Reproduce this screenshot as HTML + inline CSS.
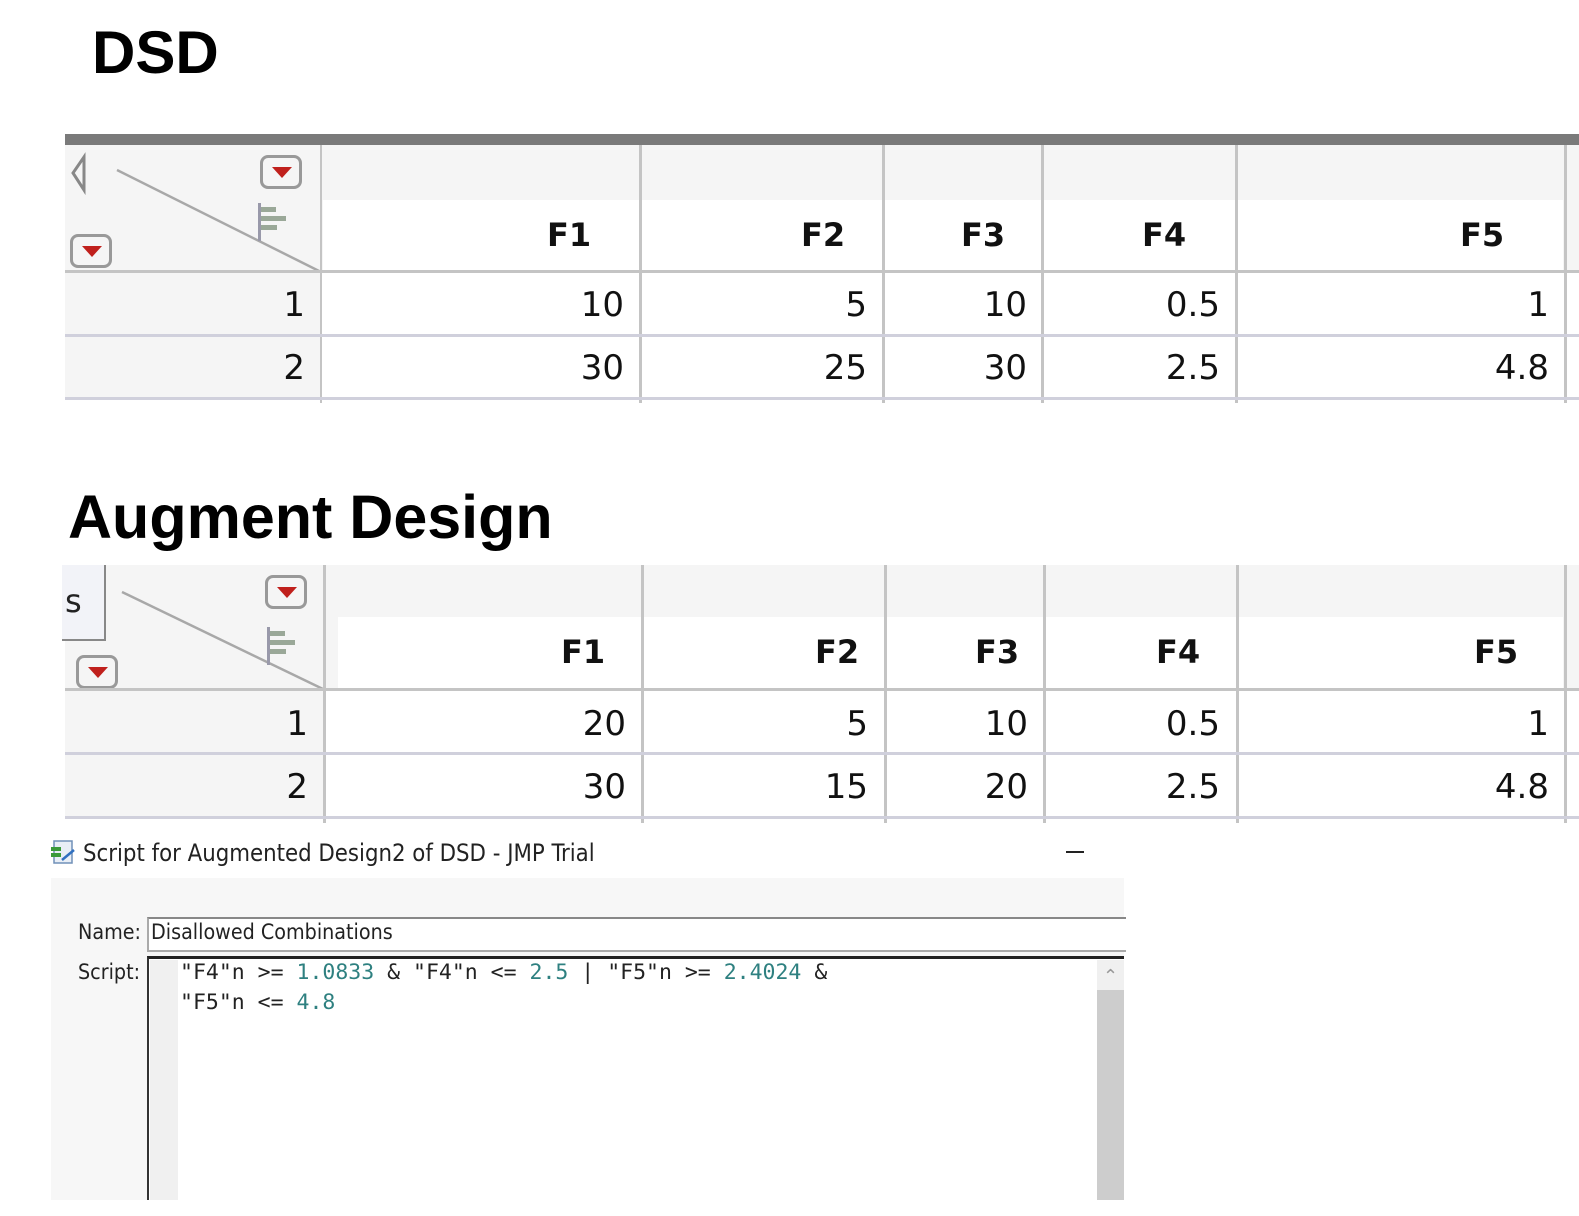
<!DOCTYPE html>
<html><head><meta charset="utf-8"><style>
body{margin:0;width:1579px;height:1216px;background:#fff;position:relative;overflow:hidden;font-family:"Liberation Sans",sans-serif}
div{position:absolute}
.t{font-family:"DejaVu Sans","Liberation Sans",sans-serif;font-size:34px;color:#111;line-height:40px}
.h{font-family:"DejaVu Sans","Liberation Sans",sans-serif;font-weight:bold;font-size:32px;color:#111;line-height:40px}
.r{text-align:right}
.vl{width:2px;background:#c4c4c4}
.hl{height:3px;background:#c4c4c4}
.btn{width:42px;height:34px;border:3px solid #999;border-radius:8px;box-sizing:border-box;background:#f5f5f5}
.btn:after{content:"";position:absolute;left:9px;top:9px;border-left:10px solid transparent;border-right:10px solid transparent;border-top:11px solid #c0201c}
.code{font-family:"DejaVu Sans Mono","Liberation Mono",monospace;font-size:21.5px;color:#222;line-height:30px;white-space:pre}
.n{color:#2e8080}
.ti{font-weight:bold;font-family:"Liberation Sans",sans-serif;color:#000}
.ui{font-family:'DejaVu Sans Condensed','DejaVu Sans',sans-serif;color:#222}
</style></head><body>
<div class="ti" style="left:92px;top:18px;font-size:60px">DSD</div>

<div style="left:65px;top:134px;width:1514px;height:11px;background:#7a7a7a"></div>
<div style="left:65px;top:145px;width:1514px;height:127px;background:#f5f5f5"></div>
<div style="left:323px;top:200px;width:1240px;height:70px;background:#fff"></div>
<div style="left:65px;top:272px;width:256px;height:127px;background:#f5f5f5"></div>
<svg style="position:absolute;left:65px;top:145px" width="258" height="128"><polygon points="19,12 8,28 19,45" fill="none" stroke="#888" stroke-width="3"/><line x1="52" y1="25" x2="256" y2="127" stroke="#a8a8a8" stroke-width="2.5"/><rect x="193" y="58" width="3" height="38" fill="#99a"/><rect x="196" y="62" width="15" height="5" fill="#9aa898"/><rect x="196" y="71" width="25" height="5" fill="#9aa898"/><rect x="196" y="80" width="16" height="5" fill="#9aa898"/></svg>
<div class="btn" style="left:260px;top:155px"></div>
<div class="btn" style="left:70px;top:234px"></div>
<div class="vl" style="left:320px;top:145px;height:258px"></div>
<div class="vl" style="left:639px;top:145px;height:258px;width:3px"></div>
<div class="vl" style="left:882px;top:145px;height:258px;width:3px"></div>
<div class="vl" style="left:1041px;top:145px;height:258px;width:3px"></div>
<div class="vl" style="left:1235px;top:145px;height:258px;width:3px"></div>
<div class="vl" style="left:1564px;top:145px;height:258px;width:3px"></div>
<div class="hl" style="left:65px;top:270px;width:1514px"></div>
<div class="hl" style="left:65px;top:334px;width:1514px;background:#d0d0dc"></div>
<div class="hl" style="left:65px;top:397px;width:1514px;background:#d0d0dc"></div>
<div class="h" style="left:547px;top:215px">F1</div>
<div class="h" style="left:801px;top:215px">F2</div>
<div class="h" style="left:961px;top:215px">F3</div>
<div class="h" style="left:1142px;top:215px">F4</div>
<div class="h" style="left:1460px;top:215px">F5</div>
<div class="t r" style="left:200px;width:105px;top:285px">1</div>
<div class="t r" style="left:200px;width:105px;top:348px">2</div>
<div class="t r" style="left:500px;width:124px;top:285px">10</div>
<div class="t r" style="left:500px;width:124px;top:348px">30</div>
<div class="t r" style="left:700px;width:167px;top:285px">5</div>
<div class="t r" style="left:700px;width:167px;top:348px">25</div>
<div class="t r" style="left:900px;width:127px;top:285px">10</div>
<div class="t r" style="left:900px;width:127px;top:348px">30</div>
<div class="t r" style="left:1100px;width:120px;top:285px">0.5</div>
<div class="t r" style="left:1100px;width:120px;top:348px">2.5</div>
<div class="t r" style="left:1400px;width:149px;top:285px">1</div>
<div class="t r" style="left:1400px;width:149px;top:348px">4.8</div>

<div class="ti" style="left:68px;top:482px;font-size:61px">Augment Design</div>

<div style="left:65px;top:565px;width:1514px;height:125px;background:#f5f5f5"></div>
<div style="left:338px;top:617px;width:1225px;height:71px;background:#fff"></div>
<div style="left:65px;top:690px;width:259px;height:128px;background:#f5f5f5"></div>
<div style="left:62px;top:565px;width:42px;height:74px;border-right:2px solid #888;border-bottom:2px solid #888;background:#f2f3f8"></div>
<div style="left:65px;top:582px;font-size:32px;color:#222;font-family:'DejaVu Sans',sans-serif">s</div>
<svg style="position:absolute;left:65px;top:565px" width="262" height="128"><line x1="57" y1="27" x2="260" y2="125" stroke="#a8a8a8" stroke-width="2.5"/><rect x="202" y="62" width="3" height="38" fill="#99a"/><rect x="205" y="66" width="15" height="5" fill="#9aa898"/><rect x="205" y="75" width="25" height="5" fill="#9aa898"/><rect x="205" y="84" width="16" height="5" fill="#9aa898"/></svg>
<div class="btn" style="left:265px;top:575px"></div>
<div class="btn" style="left:76px;top:655px"></div>
<div class="vl" style="left:323px;top:565px;height:258px;width:3px"></div>
<div class="vl" style="left:641px;top:565px;height:258px;width:3px"></div>
<div class="vl" style="left:884px;top:565px;height:258px;width:3px"></div>
<div class="vl" style="left:1043px;top:565px;height:258px;width:3px"></div>
<div class="vl" style="left:1236px;top:565px;height:258px;width:3px"></div>
<div class="vl" style="left:1564px;top:565px;height:258px;width:3px"></div>
<div class="hl" style="left:65px;top:688px;width:1514px"></div>
<div class="hl" style="left:65px;top:752px;width:1514px;background:#d0d0dc"></div>
<div class="hl" style="left:65px;top:816px;width:1514px;background:#d0d0dc"></div>
<div class="h" style="left:561px;top:632px">F1</div>
<div class="h" style="left:815px;top:632px">F2</div>
<div class="h" style="left:975px;top:632px">F3</div>
<div class="h" style="left:1156px;top:632px">F4</div>
<div class="h" style="left:1474px;top:632px">F5</div>
<div class="t r" style="left:200px;width:108px;top:704px">1</div>
<div class="t r" style="left:200px;width:108px;top:767px">2</div>
<div class="t r" style="left:500px;width:126px;top:704px">20</div>
<div class="t r" style="left:500px;width:126px;top:767px">30</div>
<div class="t r" style="left:700px;width:168px;top:704px">5</div>
<div class="t r" style="left:700px;width:168px;top:767px">15</div>
<div class="t r" style="left:900px;width:128px;top:704px">10</div>
<div class="t r" style="left:900px;width:128px;top:767px">20</div>
<div class="t r" style="left:1100px;width:120px;top:704px">0.5</div>
<div class="t r" style="left:1100px;width:120px;top:767px">2.5</div>
<div class="t r" style="left:1400px;width:149px;top:704px">1</div>
<div class="t r" style="left:1400px;width:149px;top:767px">4.8</div>

<svg style="position:absolute;left:50px;top:840px" width="28" height="26"><rect x="4" y="1" width="18" height="22" fill="#e8eef6" stroke="#7090b8" stroke-width="1.5"/><rect x="1" y="7" width="10" height="4" fill="#3a9a3a"/><rect x="1" y="13" width="10" height="4" fill="#3a9a3a"/><path d="M12 20 L24 10" stroke="#3070c0" stroke-width="2.5"/></svg>
<div class="ui" style="left:83px;top:839px;font-size:23.7px">Script for Augmented Design2 of DSD - JMP Trial</div>
<div style="left:1066px;top:851px;width:18px;height:2px;background:#222"></div>
<div style="left:51px;top:878px;width:1073px;height:322px;background:#f7f7f7"></div>
<div class="ui" style="left:78px;top:920px;font-size:21.3px">Name:</div>
<div style="left:147px;top:917px;width:977px;height:31px;background:#fff;border-top:2px solid #888;border-bottom:2px solid #aaa;border-left:2px solid #aaa"></div>
<div class="ui" style="left:151px;top:920px;font-size:21.3px">Disallowed Combinations</div>
<div class="ui" style="left:78px;top:960px;font-size:21.3px">Script:</div>
<div style="left:147px;top:956px;width:977px;height:244px;background:#fff;border-top:3px solid #222;border-left:2px solid #333;box-sizing:border-box"></div>
<div style="left:150px;top:960px;width:28px;height:240px;background:#f0f0f0"></div>
<div style="left:1097px;top:960px;width:27px;height:30px;background:#f0f0f0;color:#999;font-size:18px;text-align:center;line-height:32px">&#8963;</div>
<div style="left:1097px;top:990px;width:27px;height:210px;background:#cdcdcd"></div>
<div class="code" style="left:180px;top:958px">"F4"n &gt;= <span class="n">1.0833</span> &amp; "F4"n &lt;= <span class="n">2.5</span> | "F5"n &gt;= <span class="n">2.4024</span> &amp;
"F5"n &lt;= <span class="n">4.8</span></div>
</body></html>
